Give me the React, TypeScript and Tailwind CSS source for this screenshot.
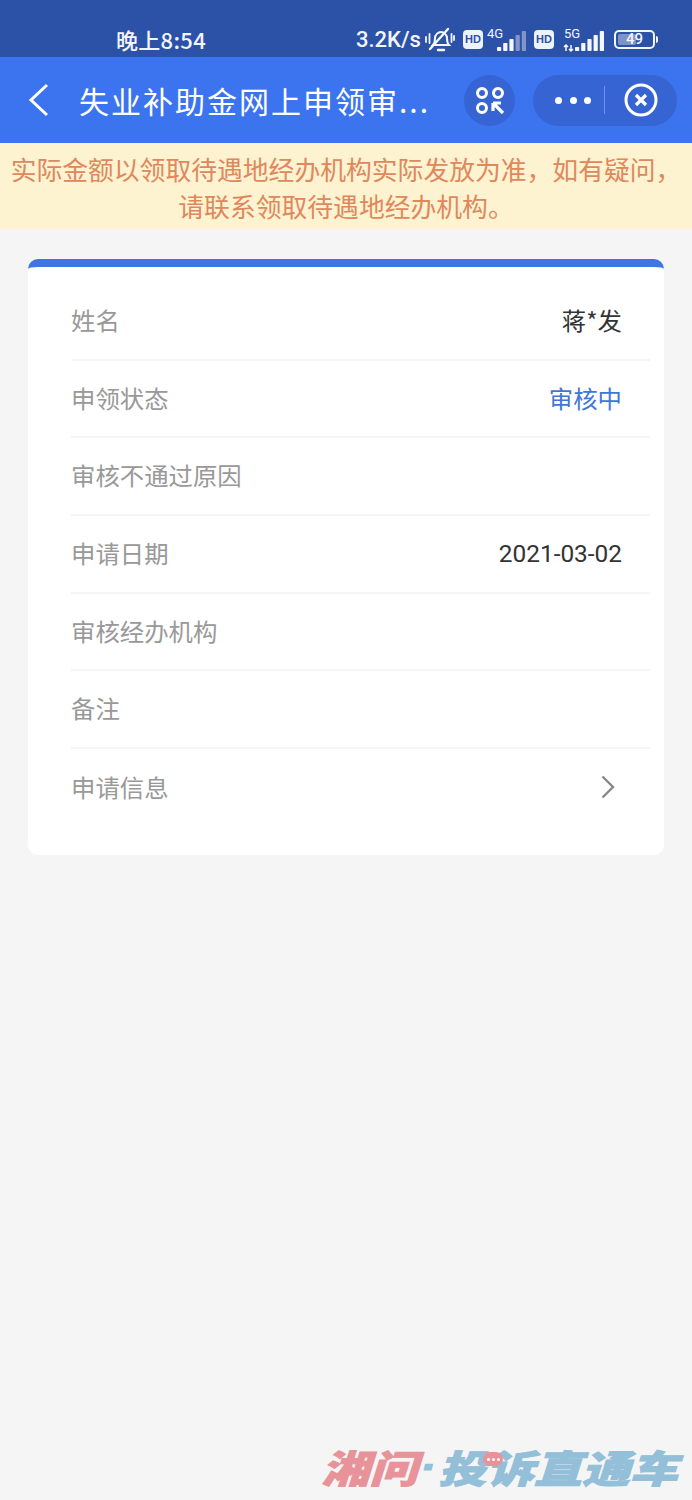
const CJK = "font-['Noto_Sans_CJK_SC','Noto_Sans',sans-serif]";

function Signal({ kind }: { kind: "4G" | "5G" }) {
  const heights = [4, 8, 12, 16, 20];
  const dim = kind === "4G" ? 2 : 0;
  return (
    <svg width="41" height="27" viewBox="0 0 41 27" className="block">
      <text x={kind === "4G" ? 0 : 1} y="12" fontSize="13" fill="#f4f7ff" fontFamily="Roboto, sans-serif">{kind}</text>
      {kind === "5G" && <path d="M3 19v6M1 21l2-2 2 2M8 25v-6M6 23l2 2 2-2" stroke="#f4f7ff" strokeWidth="1.5" fill="none" />}
      {heights.map((h, i) => (
        <rect key={i} x={kind === "4G" ? 10 + i * 6.2 : 12 + i * 6.2} y={25 - h} width="4.2" height={h} rx="0.8" fill={i >= heights.length - dim ? "#8195c9" : "#f4f7ff"} />
      ))}
    </svg>
  );
}

function Hd() {
  return (
    <span className="flex h-[19px] w-[20px] items-center justify-center rounded-[4px] bg-[#eef2fb] font-['Liberation_Sans',sans-serif] text-[11px] font-bold leading-none text-[#2c52a8]">HD</span>
  );
}

function StatusBar() {
  return (
    <div className="flex h-[57px] items-end bg-[#2c52a8] pb-[5px] pl-[116px] pr-[34px] font-['Roboto',sans-serif] text-[#f2f5fc]">
      <span className={`${CJK} text-[22px] leading-[26px] font-medium tracking-[0.3px]`}>晚上8:54</span>
      <div className="-mb-[1px] ml-auto flex items-center">
        <span className="w-[66px] text-[22px] leading-[26px] font-medium whitespace-nowrap">3.2K/s</span>
        <svg width="30" height="26" viewBox="0 0 30 26" className="ml-[3px]" fill="none" stroke="#f2f5fc" strokeWidth="2" strokeLinecap="round">
          <path d="M8 18c2-2 2-4 2-7 0-3 3-6 6-6s6 3 6 6c0 3 0 5 2 7z" />
          <path d="M5 22L23 2" strokeWidth="2.4" />
          <path d="M13 23h6" strokeWidth="2.4" />
          <path d="M1 10v5M4.500 7v9M26.500 7v8M29 9v4" strokeWidth="1.8" />
        </svg>
        <span className="ml-[8px]"><Hd /></span>
        <span className="ml-[4px]"><Signal kind="4G" /></span>
        <span className="ml-[6px]"><Hd /></span>
        <span className="ml-[9px]"><Signal kind="5G" /></span>
        <div className="relative ml-[10px] flex h-[19px] w-[41px] items-center justify-center overflow-hidden rounded-[5px] border-2 border-[#f2f5fc]">
          <div className="absolute inset-y-[2px] left-[2px] w-[18px] rounded-[2px] bg-[#7e93c8]" />
          <span className="relative text-[15px] leading-none font-medium">49</span>
        </div>
        <span className="ml-[1px] h-[7px] w-[2px] rounded-r bg-[#f2f5fc]" />
      </div>
    </div>
  );
}

function NavBar() {
  return (
    <div className="flex h-[86px] items-center bg-[#3c74f0] pl-[28px] pr-[14px] text-white">
      <svg width="22" height="34" viewBox="0 0 22 34" fill="none" stroke="white" strokeWidth="3">
        <path d="M19 2L3 17l16 15" />
      </svg>
      <div className={`${CJK} ml-[29px] w-[372px] shrink-0 text-[30px] leading-[40px] tracking-[2px] whitespace-nowrap`}>失业补助金网上申领审...</div>
      <div className="ml-[13px] flex h-[51px] w-[51px] items-center justify-center rounded-full bg-[#3664d2]">
        <svg width="30" height="30" viewBox="0 0 30 30" fill="none" stroke="white" strokeWidth="3">
          <circle cx="7" cy="8" r="4.500" />
          <circle cx="23" cy="8" r="4.500" />
          <circle cx="7" cy="23" r="4.500" />
          <path d="M18 18h8M18 18v8M18 18l10 10" strokeWidth="3.2" />
        </svg>
      </div>
      <div className="ml-[18px] flex h-[51px] w-[144px] items-center rounded-full bg-[#3664d2]">
        <div className="ml-[22px] flex w-[36px] justify-between">
          <span className="h-[7px] w-[7px] rounded-full bg-white" />
          <span className="h-[7px] w-[7px] rounded-full bg-white" />
          <span className="h-[7px] w-[7px] rounded-full bg-white" />
        </div>
        <span className="ml-[13px] h-[28px] w-px bg-[#6f93e6]" />
        <svg width="34" height="34" viewBox="0 0 34 34" fill="none" stroke="white" className="ml-[19px]">
          <circle cx="17" cy="17" r="15" strokeWidth="3" />
          <path d="M12 12l10 10M22 12L12 22" strokeWidth="3.2" />
        </svg>
      </div>
    </div>
  );
}

const rows: { label: string; value?: string; tone?: string; arrow?: boolean }[] = [
  { label: "姓名", value: "蒋*发", tone: "text-[#333333]" },
  { label: "申领状态", value: "审核中", tone: "text-[#3f76d8]" },
  { label: "审核不通过原因" },
  { label: "申请日期", value: "2021-03-02", tone: "text-[#333333]" },
  { label: "审核经办机构" },
  { label: "备注" },
  { label: "申请信息", arrow: true },
];

export default function App() {
  return (
    <div className={`${CJK} flex h-[1500px] w-[692px] flex-col overflow-hidden bg-[#f5f5f5]`}>
      <StatusBar />
      <NavBar />
      <div className="flex h-[86px] flex-col items-center justify-center bg-[#fdf3d0] pt-[2px] text-center text-[25.8px] leading-[37px] whitespace-nowrap text-[#e0875c]">
        <div>实际金额以领取待遇地经办机构实际发放为准，如有疑问，</div>
        <div>请联系领取待遇地经办机构。</div>
      </div>
      <div className="mx-[28px] mt-[30px] h-[596px] overflow-hidden rounded-[10px] border-t-[8px] border-[#3f76e4] bg-white pl-[43px] pr-[14px]">
        <div className="pt-[16px]">
          {rows.map((r, i) => (
            <div key={r.label} className={`flex h-[77.67px] items-center pr-[28px] pb-[1px] text-[24.4px] ${i < rows.length - 1 ? "border-b-2 border-[#f5f5f5]" : ""}`}>
              <span className="text-[#999999]">{r.label}</span>
              {r.value && <span className={`ml-auto ${r.tone} ${r.value.startsWith("2021") ? "pt-[2px] font-['Roboto',sans-serif]" : ""}`}>{r.value}</span>}
              {r.arrow && (
                <svg width="14" height="24" viewBox="0 0 14 24" fill="none" stroke="#888888" strokeWidth="2.4" className="ml-auto mr-[7px]">
                  <path d="M1.5 1.5L12 12 1.5 22.5" />
                </svg>
              )}
            </div>
          ))}
        </div>
      </div>
      <div className="relative mt-auto mb-[11px] mr-[14px] flex items-center justify-end">
        <div className="flex origin-right scale-x-[1.26] items-center text-[38px] leading-[44px] font-black whitespace-nowrap italic [-webkit-text-stroke:1px_currentColor]">
          <span className="text-[#e8929a]">湘问</span>
          <span className="mx-[2px] font-['Liberation_Sans',sans-serif] text-[#93bfd9]">·</span>
          <span className="text-[#93bfd9]">投诉直通车</span>
        </div>
        <span className="absolute top-[7px] right-[175px] flex h-[14px] w-[20px] items-center justify-center gap-[2px] rounded-full bg-[#e8929a]">
          <span className="h-[3px] w-[3px] rounded-full bg-white" />
          <span className="h-[3px] w-[3px] rounded-full bg-white" />
          <span className="h-[3px] w-[3px] rounded-full bg-white" />
        </span>
      </div>
    </div>
  );
}
